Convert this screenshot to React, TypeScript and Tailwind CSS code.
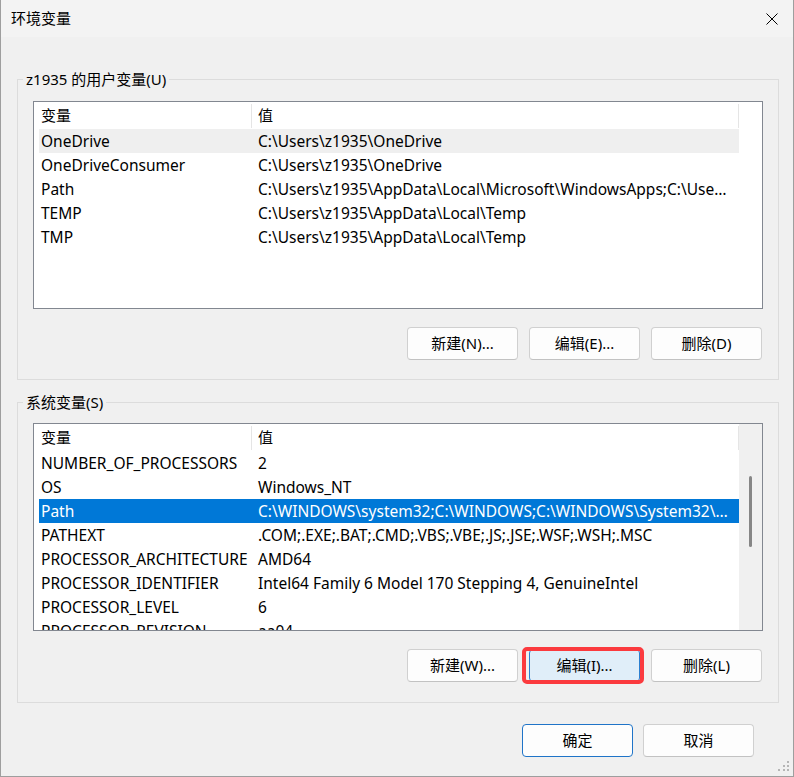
const font = {
  fontFamily: '"Noto Sans", "Noto Sans CJK SC", sans-serif',
};

type Row = { name: string; value: string; state?: "hover" | "selected" };

const userVars: Row[] = [
  { name: "OneDrive", value: "C:\\Users\\z1935\\OneDrive", state: "hover" },
  { name: "OneDriveConsumer", value: "C:\\Users\\z1935\\OneDrive" },
  {
    name: "Path",
    value:
      "C:\\Users\\z1935\\AppData\\Local\\Microsoft\\WindowsApps;C:\\Users\\z1935\\AppData\\Local\\Programs",
  },
  { name: "TEMP", value: "C:\\Users\\z1935\\AppData\\Local\\Temp" },
  { name: "TMP", value: "C:\\Users\\z1935\\AppData\\Local\\Temp" },
];

const systemVars: Row[] = [
  { name: "NUMBER_OF_PROCESSORS", value: "2" },
  { name: "OS", value: "Windows_NT" },
  {
    name: "Path",
    value:
      "C:\\WINDOWS\\system32;C:\\WINDOWS;C:\\WINDOWS\\System32\\Wbem;C:\\WINDOWS\\System32\\WindowsPowerShell",
    state: "selected",
  },
  { name: "PATHEXT", value: ".COM;.EXE;.BAT;.CMD;.VBS;.VBE;.JS;.JSE;.WSF;.WSH;.MSC" },
  { name: "PROCESSOR_ARCHITECTURE", value: "AMD64" },
  { name: "PROCESSOR_IDENTIFIER", value: "Intel64 Family 6 Model 170 Stepping 4, GenuineIntel" },
  { name: "PROCESSOR_LEVEL", value: "6" },
  { name: "PROCESSOR_REVISION", value: "aa04" },
];

const Button = ({ label, focused, primary }: { label: string; focused?: boolean; primary?: boolean }) => (
  <div
    className={`w-[111px] h-[33px] flex items-center justify-center rounded-[4px] border text-[15px] text-black ${
      focused
        ? "bg-[#e0eef9] border-[#2b7fd0]"
        : primary
        ? "bg-[#fdfdfd] border-[#1f74c8]"
        : "bg-[#fdfdfd] border-[#d0d0d0] border-b-[#c2c2c2]"
    }`}
  >
    {label}
  </div>
);

const VarList = ({ rows, scrollbar }: { rows: Row[]; scrollbar?: boolean }) => (
  <div className="h-[208px] border border-[#828790] bg-white overflow-hidden flex">
    <div className="pl-[5px] w-[705px] shrink-0">
      <div className="w-[700px] h-[27px] flex items-center text-[15px] text-black">
        <div className="w-[212px] pl-[2px]">变量</div>
        <div className="w-px h-[24px] bg-[#e5e5e5]" />
        <div className="flex-1 pl-[6px]">值</div>
        <div className="w-px h-[24px] bg-[#e5e5e5]" />
      </div>
      {rows.map((row) => (
        <div
          key={row.name}
          className={`w-[700px] h-[24px] pt-[2px] flex items-center text-[15.5px] ${
            row.state === "selected"
              ? "bg-[#0078d7] text-white"
              : row.state === "hover"
              ? "bg-[#efefef] text-black"
              : "text-black"
          }`}
        >
          <div className="w-[213px] shrink-0 pl-[2px] whitespace-nowrap overflow-hidden">{row.name}</div>
          <div className="flex-1 min-w-0 pl-[6px] pr-[8px] truncate">{row.value}</div>
        </div>
      ))}
    </div>
    {scrollbar && (
      <div className="flex-1 bg-[#f0f0f0] flex justify-center">
        <div className="w-[3px] h-[71px] mt-[52px] rounded-full bg-[#868686]" />
      </div>
    )}
  </div>
);

const Group = ({
  title,
  children,
  className,
}: {
  title: string;
  children: React.ReactNode;
  className: string;
}) => (
  <fieldset className={`w-[762px] ml-[16px] border border-[#dcdcdc] px-[15px] ${className}`}>
    <legend className="ml-[-10px] px-[3px] text-[15px] leading-[20px] text-black">{title}</legend>
    {children}
  </fieldset>
);

export default function App() {
  return (
    <div
      className="relative w-[794px] h-[777px] box-border bg-[#f0f0f0] border-l border-r border-b border-[#9e9e9e]"
      style={font}
    >
      <div className="h-[37px] bg-[#f3f3f3] flex items-center justify-between pl-[10px] pr-[15px]">
        <span className="text-[15px] text-black">环境变量</span>
        <svg width="12" height="12" viewBox="0 0 12 12">
          <path d="M0.5 0.5 L11.5 11.5 M11.5 0.5 L0.5 11.5" stroke="#000" strokeWidth="1" />
        </svg>
      </div>

      <Group title="z1935 的用户变量(U)" className="mt-[32px] pt-[12px] pb-[19px]">
        <VarList rows={userVars} />
        <div className="mt-[18px] flex justify-end gap-[11px] pr-[1px]">
          <Button label="新建(N)..." />
          <Button label="编辑(E)..." />
          <Button label="删除(D)" />
        </div>
      </Group>

      <Group title="系统变量(S)" className="mt-[12px] pt-[11px] pb-[20px]">
        <VarList rows={systemVars} scrollbar />
        <div className="mt-[18px] flex justify-end gap-[11px] pr-[1px]">
          <Button label="新建(W)..." />
          <div className="relative">
            <Button label="编辑(I)..." focused />
            <span className="absolute left-[-7px] top-[-2px] w-[122px] h-[37px] rounded-[5px] border-[4px] border-[#fb3a3e] pointer-events-none" />
          </div>
          <Button label="删除(L)" />
        </div>
      </Group>

      <div className="mt-[21px] flex justify-end gap-[10px] pr-[39px]">
        <Button label="确定" primary />
        <Button label="取消" />
      </div>

      <svg className="absolute right-[3px] bottom-[3px]" width="12" height="12" viewBox="0 0 12 12">
        <g fill="#b5b5b5">
          <rect x="9" y="0" width="2" height="2" />
          <rect x="5" y="4" width="2" height="2" />
          <rect x="9" y="4" width="2" height="2" />
          <rect x="0" y="8" width="2" height="2" />
          <rect x="5" y="8" width="2" height="2" />
          <rect x="9" y="8" width="2" height="2" />
        </g>
      </svg>
    </div>
  );
}
